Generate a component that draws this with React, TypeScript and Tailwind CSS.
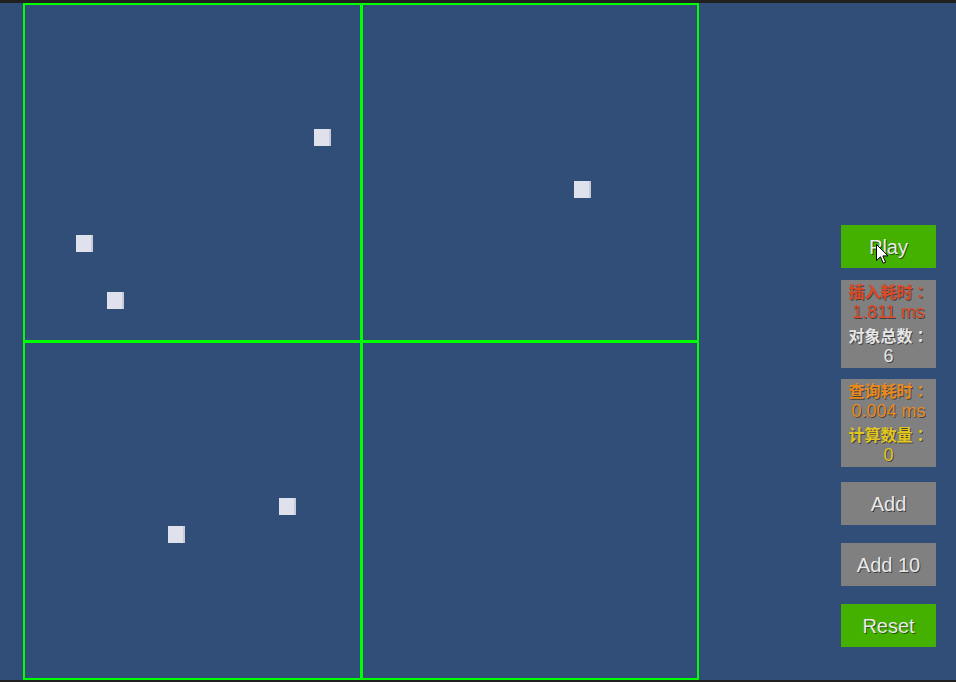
import React from "react";

const squares: [number, number][] = [
  [314, 129],
  [76, 235],
  [107, 292],
  [574, 181],
  [279, 498],
  [168, 526],
];

function Btn({ label, green }: { label: string; green?: boolean }) {
  return (
    <div
      className={`relative h-[43px] w-[95px] flex items-center justify-center text-[20px] text-[#e9e9e9] [text-shadow:1px_1px_0_rgba(0,0,0,0.55)] ${
        green ? "bg-[#44b000]" : "bg-[#808080]"
      }`}
    >
      {label}
    </div>
  );
}

function Label({ text, color, first }: { text: string; color: string; first?: boolean }) {
  return (
    <div
      className={`h-[20px] leading-[20px] text-[16px] font-bold ${first ? "" : "mt-[3px]"}`}
      style={{ color }}
    >
      {text}
      <span style={{ fontFamily: '"Noto Sans CJK TC", sans-serif' }}>：</span>
    </div>
  );
}

function Value({ text, color }: { text: string; color: string }) {
  return (
    <div className="mt-[1px] h-[20px] leading-[20px] text-[18px]" style={{ color }}>
      {text}
    </div>
  );
}

export default function App() {
  return (
    <div
      className="w-[956px] h-[682px] flex flex-col overflow-hidden"
      style={{ fontFamily: '"Liberation Sans", "Noto Sans CJK SC", sans-serif' }}
    >
      <div className="h-[3px] bg-[#202020]" />
      <div className="relative flex-1 flex bg-[#314e79]">
        <div className="ml-[23px] w-[676px] h-[677px] border-2 border-[#00ff00] bg-[#00ff00] grid grid-cols-[335px_334px] grid-rows-[335px_335px] gap-[3px]">
          <div className="bg-[#314e79]" />
          <div className="bg-[#314e79]" />
          <div className="bg-[#314e79]" />
          <div className="bg-[#314e79]" />
        </div>
        {squares.map(([x, y], i) => (
          <div
            key={i}
            className="absolute w-[17px] h-[17px] bg-[#dfe2ec] border-r-2 border-[#c9ccd6]"
            style={{ left: x, top: y - 3 }}
          />
        ))}
        <div className="ml-[142px] mt-[222px] flex flex-col w-[95px]">
          <div className="relative">
            <Btn label="Play" green />
            <svg
              className="absolute left-[35px] top-[19px]"
              width="13"
              height="21"
              viewBox="0 0 13 21"
            >
              <path
                d="M0.5 0.5 L0.5 16.5 L4.5 12.8 L7.2 19.2 L9.6 18.2 L6.9 11.9 L12 11.9 Z"
                fill="#ffffff"
                stroke="#000000"
                strokeWidth="1"
                strokeLinejoin="miter"
              />
            </svg>
          </div>
          <div className="mt-[12px] h-[88px] bg-[#808080] flex flex-col items-center pt-[1px] [text-shadow:1px_1px_0_rgba(0,0,0,0.5)]">
            <Label text="插入耗时" color="#de4a26" first />
            <Value text="1.811 ms" color="#de4a26" />
            <Label text="对象总数" color="#e6e6e6" />
            <Value text="6" color="#e6e6e6" />
          </div>
          <div className="mt-[11px] h-[88px] bg-[#808080] flex flex-col items-center pt-[1px] [text-shadow:1px_1px_0_rgba(0,0,0,0.5)]">
            <Label text="查询耗时" color="#ea8a1c" first />
            <Value text="0.004 ms" color="#ea8a1c" />
            <Label text="计算数量" color="#e2c61e" />
            <Value text="0" color="#e2c61e" />
          </div>
          <div className="mt-[15px]">
            <Btn label="Add" />
          </div>
          <div className="mt-[18px]">
            <Btn label="Add 10" />
          </div>
          <div className="mt-[18px]">
            <Btn label="Reset" green />
          </div>
        </div>
      </div>
      <div className="h-[2px] bg-[#202020]" />
    </div>
  );
}
